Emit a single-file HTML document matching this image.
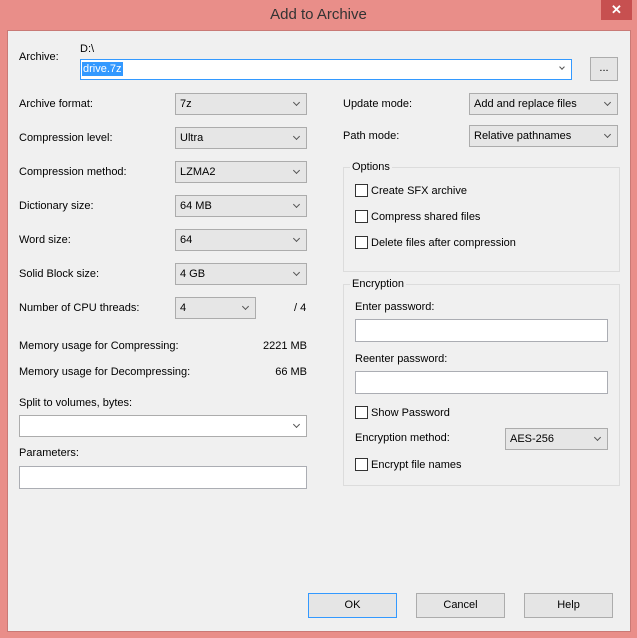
<!DOCTYPE html>
<html><head><meta charset="utf-8"><style>
*{box-sizing:border-box;margin:0;padding:0}
body{width:637px;height:638px;background:#e98e89;position:relative;overflow:hidden;font-family:"Liberation Sans",sans-serif;font-size:11px;color:#000}
.a{position:absolute;white-space:nowrap}
.t{position:absolute;white-space:nowrap;line-height:14px}
.client{position:absolute;left:7px;top:30px;width:624px;height:602px;background:#f0f0f0;border:1px solid #c97a76}
.cb{position:absolute;height:22px;background:#e6e6e6;border:1px solid #acacac;padding-left:4px;line-height:20px}
.cb.w{background:#fff}
.cb:after{content:"";position:absolute;right:7px;top:6px;width:4px;height:4px;border-right:1.5px solid #555;border-bottom:1.5px solid #555;transform:rotate(45deg)}
.in{position:absolute;background:#fff;border:1px solid #abadb3}
.ck{position:absolute;width:13px;height:13px;background:#fff;border:1px solid #333}
.g{position:absolute;border:1px solid #dcdcdc}
.gl{position:absolute;background:#f0f0f0;padding:0 2px;line-height:14px}
.btn{position:absolute;height:25px;width:89px;background:#e5e5e5;border:1px solid #acacac;text-align:center;line-height:23px}
</style></head><body>
<div class="t" style="left:0;width:637px;top:6px;text-align:center;font-size:15px;line-height:18px;color:#333">Add to Archive</div>
<div class="a" style="left:601px;top:0;width:31px;height:20px;background:#c75050;color:#fff;text-align:center;font-size:13px;line-height:19px;font-weight:bold">✕</div>
<div class="client"></div>

<div class="t" style="left:19px;top:50px">Archive:</div>
<div class="t" style="left:80px;top:42px">D:\</div>
<div class="in" style="left:80px;top:59px;width:492px;height:21px;border-color:#3399ff"></div>
<div class="a" style="left:82px;top:62px;background:#3399ff;color:#fff;line-height:14px;padding:0 1px">drive.7z</div>
<div class="a" style="left:560px;top:65px;width:4px;height:4px;border-right:1.5px solid #555;border-bottom:1.5px solid #555;transform:rotate(45deg)"></div>
<div class="btn" style="left:590px;top:57px;width:28px;height:24px;line-height:20px">...</div>

<div class="t" style="left:19px;top:97px">Archive format:</div>
<div class="cb" style="left:175px;top:93px;width:132px">7z</div>
<div class="t" style="left:19px;top:131px">Compression level:</div>
<div class="cb" style="left:175px;top:127px;width:132px">Ultra</div>
<div class="t" style="left:19px;top:165px">Compression method:</div>
<div class="cb" style="left:175px;top:161px;width:132px">LZMA2</div>
<div class="t" style="left:19px;top:199px">Dictionary size:</div>
<div class="cb" style="left:175px;top:195px;width:132px">64 MB</div>
<div class="t" style="left:19px;top:233px">Word size:</div>
<div class="cb" style="left:175px;top:229px;width:132px">64</div>
<div class="t" style="left:19px;top:267px">Solid Block size:</div>
<div class="cb" style="left:175px;top:263px;width:132px">4 GB</div>
<div class="t" style="left:19px;top:301px">Number of CPU threads:</div>
<div class="cb" style="left:175px;top:297px;width:81px">4</div>
<div class="t" style="left:294px;top:301px">/ 4</div>

<div class="t" style="left:19px;top:339px">Memory usage for Compressing:</div>
<div class="t" style="left:200px;width:107px;text-align:right;top:339px">2221 MB</div>
<div class="t" style="left:19px;top:365px">Memory usage for Decompressing:</div>
<div class="t" style="left:200px;width:107px;text-align:right;top:365px">66 MB</div>
<div class="t" style="left:19px;top:396px">Split to volumes, bytes:</div>
<div class="cb w" style="left:19px;top:415px;width:288px"></div>
<div class="t" style="left:19px;top:446px">Parameters:</div>
<div class="in" style="left:19px;top:466px;width:288px;height:23px"></div>

<div class="t" style="left:343px;top:97px">Update mode:</div>
<div class="cb" style="left:469px;top:93px;width:149px">Add and replace files</div>
<div class="t" style="left:343px;top:129px">Path mode:</div>
<div class="cb" style="left:469px;top:125px;width:149px">Relative pathnames</div>

<div class="g" style="left:343px;top:167px;width:277px;height:105px"></div>
<div class="gl" style="left:350px;top:160px">Options</div>
<div class="ck" style="left:355px;top:184px"></div><div class="t" style="left:371px;top:184px">Create SFX archive</div>
<div class="ck" style="left:355px;top:210px"></div><div class="t" style="left:371px;top:210px">Compress shared files</div>
<div class="ck" style="left:355px;top:236px"></div><div class="t" style="left:371px;top:236px">Delete files after compression</div>

<div class="g" style="left:343px;top:284px;width:277px;height:202px"></div>
<div class="gl" style="left:350px;top:277px">Encryption</div>
<div class="t" style="left:355px;top:300px">Enter password:</div>
<div class="in" style="left:355px;top:319px;width:253px;height:23px"></div>
<div class="t" style="left:355px;top:352px">Reenter password:</div>
<div class="in" style="left:355px;top:371px;width:253px;height:23px"></div>
<div class="ck" style="left:355px;top:406px"></div><div class="t" style="left:371px;top:406px">Show Password</div>
<div class="t" style="left:355px;top:431px">Encryption method:</div>
<div class="cb" style="left:505px;top:428px;width:103px">AES-256</div>
<div class="ck" style="left:355px;top:458px"></div><div class="t" style="left:371px;top:458px">Encrypt file names</div>

<div class="btn" style="left:308px;top:593px;border-color:#3399ff">OK</div>
<div class="btn" style="left:416px;top:593px">Cancel</div>
<div class="btn" style="left:524px;top:593px">Help</div>
</body></html>
